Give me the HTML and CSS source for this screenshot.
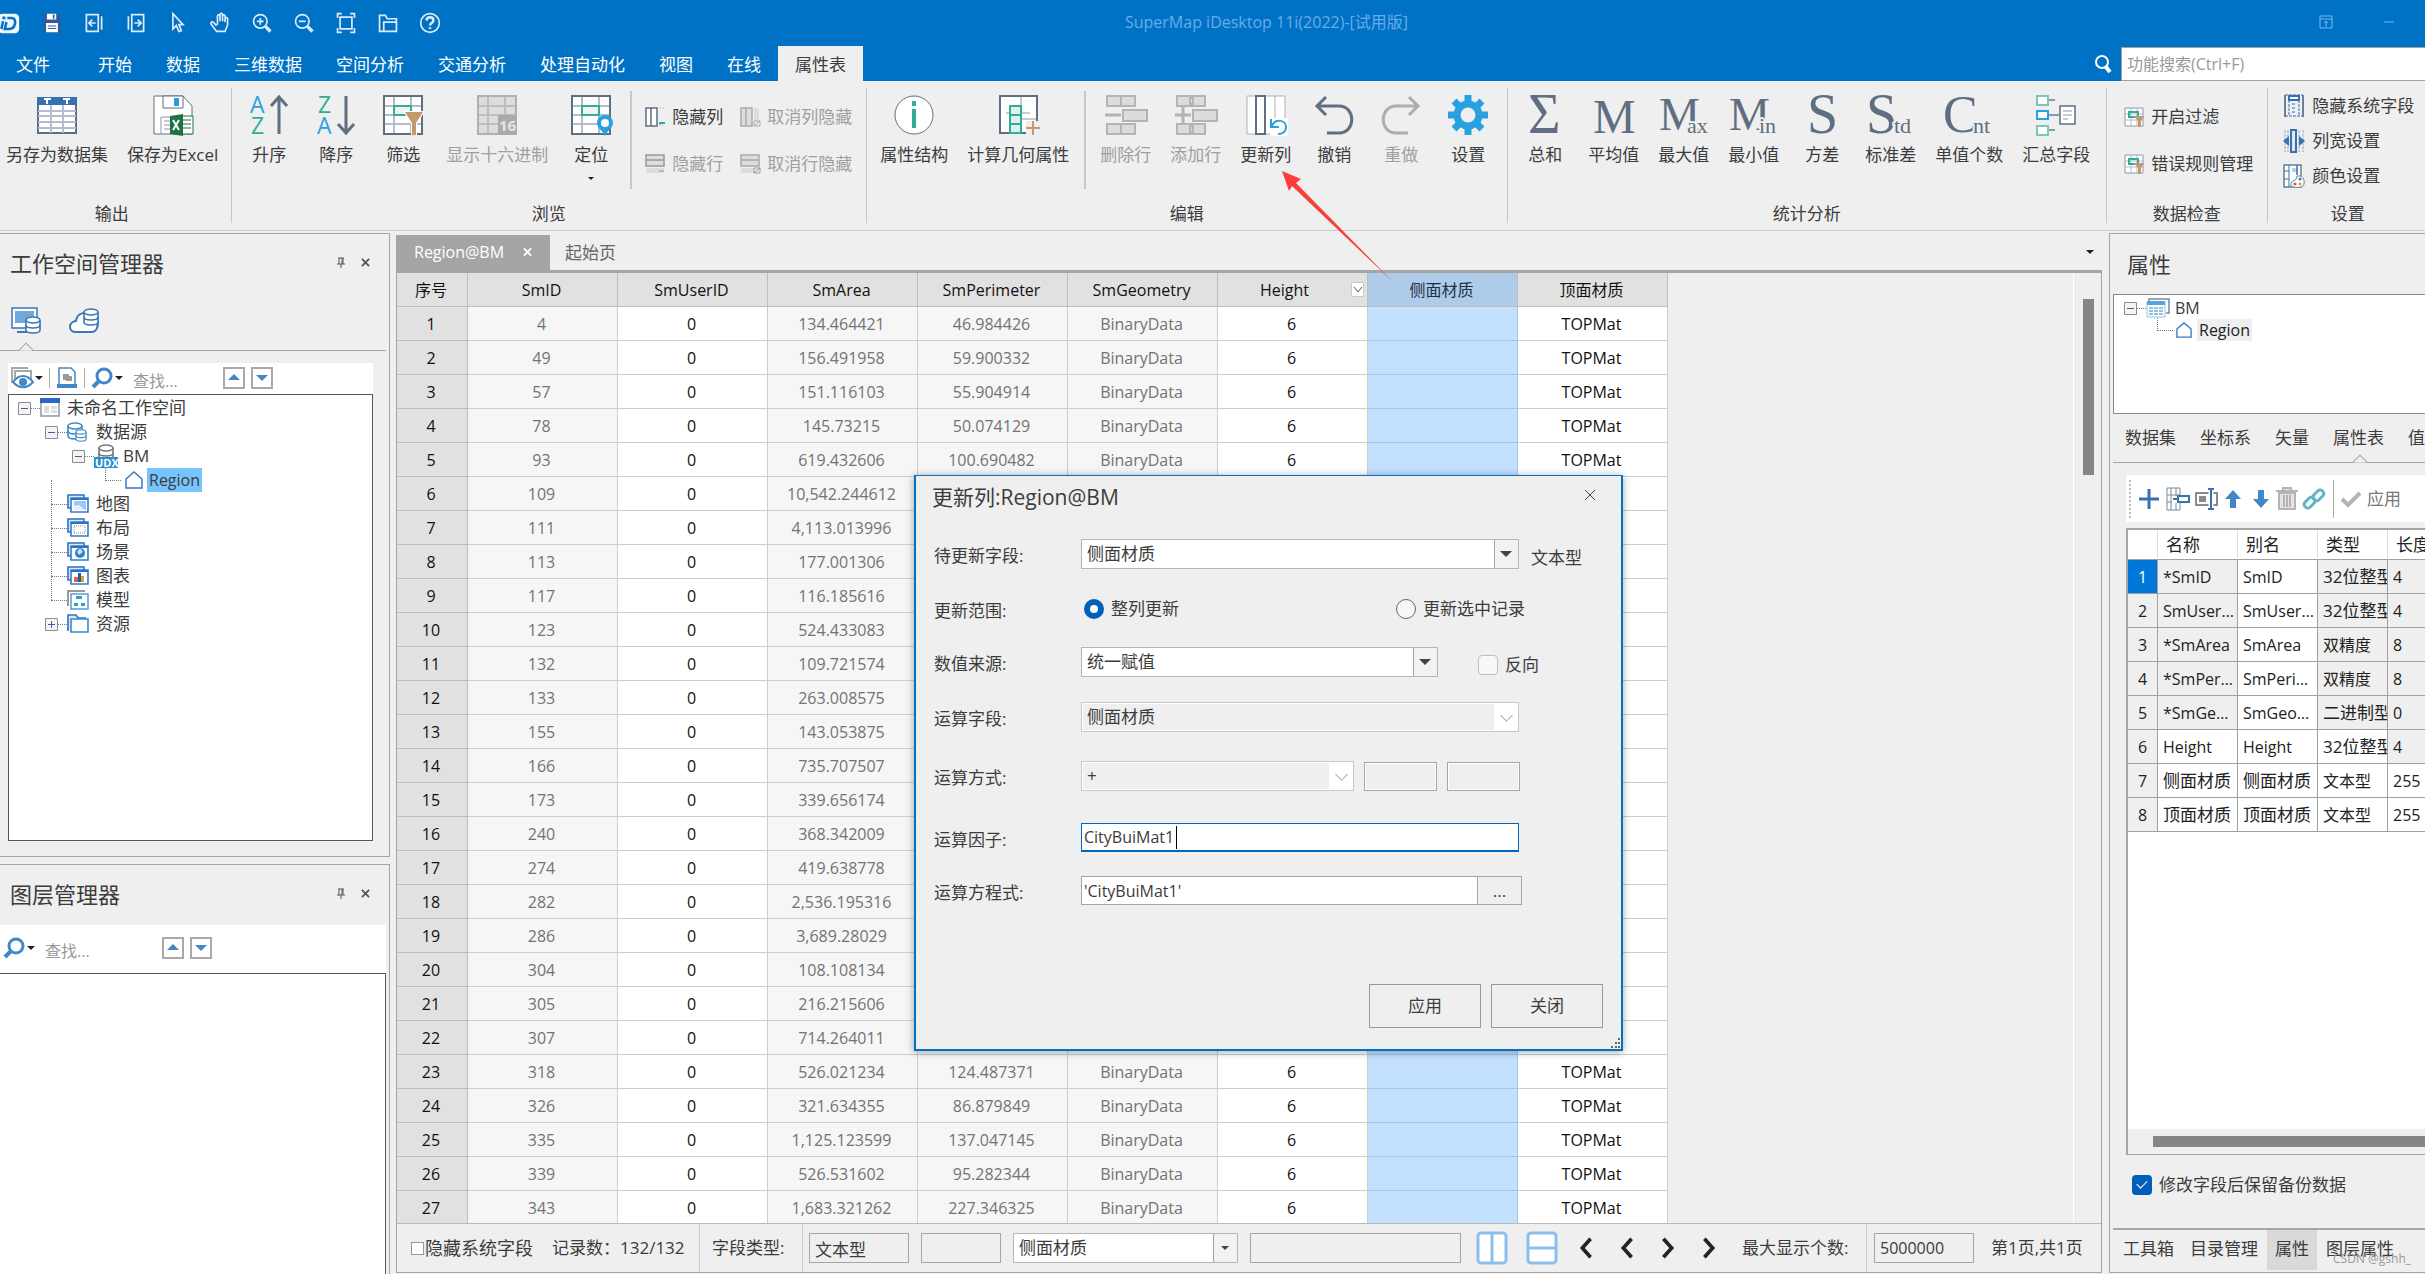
FILE: index.html
```html
<!DOCTYPE html>
<html lang="zh-CN">
<head>
<meta charset="utf-8">
<title>SuperMap iDesktop</title>
<link rel="stylesheet" href="styles.css">
</head>
<body>
<svg class="defs" aria-hidden="true">
  <symbol id="grid" viewBox="0 0 40 40"><path d="M1 1h38v38H1z" fill="#fff" stroke="#5f6f81" stroke-width="2"/><path d="M11 2v36M28 2v36M2 11h36M2 20h36M2 29h36" stroke="#b4bcc9" stroke-width="2"/><path d="M11 11h17v9H11z" fill="#f2f2f2" stroke="#30ae96" stroke-width="2"/></symbol>
  <symbol id="filter" viewBox="0 0 20 20"><path d="M1 1h18v18H1z" fill="#fff" stroke="#8d98a7"/><path d="M7 1v18M13 1v18M1 7h18M1 13h18" stroke="#b4bcc9"/><path d="M5 5h9v5H5z" fill="none" stroke="#30ae96" stroke-width="2"/><path d="M10 9h10l-3 5v6h-3v-6z" fill="#c49a6c"/></symbol>
  <symbol id="pin" viewBox="0 0 10 12"><path d="M2 1h6M3 1v6M7 1v6M6 1v6M1 7h8M5 7v4" stroke="#555" fill="none"/></symbol>
  <symbol id="cross" viewBox="0 0 10 10"><path d="M1 1l8 8M9 1l-8 8" stroke="#555" stroke-width="2" fill="none"/></symbol>
  <symbol id="lens" viewBox="0 0 22 22"><circle cx="13" cy="9" r="7" fill="#fff" stroke="#4387c7" stroke-width="3"/><path d="M8 14l-6 6" stroke="#4387c7" stroke-width="4"/></symbol>
  <symbol id="up" viewBox="0 0 22 22"><path d="M1 1h20v20H1z" fill="#fff" stroke="#a9a9a9" stroke-width="2"/><path d="M5 13l6-6 6 6z" fill="#4387c7"/></symbol>
  <symbol id="down" viewBox="0 0 22 22"><path d="M1 1h20v20H1z" fill="#fff" stroke="#a9a9a9" stroke-width="2"/><path d="M5 8l6 6 6-6z" fill="#4387c7"/></symbol>
  <symbol id="minus" viewBox="0 0 13 13"><path d="M.5.5h12v12H.5z" fill="#f4f4f4" stroke="#8d8d8d"/><path d="M3 6.500h7" stroke="#3b5fa8"/></symbol>
  <symbol id="plus" viewBox="0 0 13 13"><path d="M.5.5h12v12H.5z" fill="#f4f4f4" stroke="#8d8d8d"/><path d="M3 6.500h7M6.500 3v7" stroke="#3b5fa8"/></symbol>
  <symbol id="region" viewBox="0 0 20 18"><path d="M2 17V8l8-7 8 7v9z" fill="#fff" stroke="#3a78c4" stroke-width="1.500"/></symbol>
  <symbol id="sheets" viewBox="0 0 22 20"><path d="M4 14H1V1h16v3" fill="#dceaf8" stroke="#2f6fc4" stroke-width="1.600"/><path d="M4 4h17v14H4z" fill="#fff" stroke="#2f7fc8" stroke-width="1.600"/><path d="M4 5h17" stroke="#2f6fc4" stroke-width="2"/></symbol>
  <symbol id="db" viewBox="0 0 16 18"><path d="M1 4v10c0 4 14 4 14 0V4" fill="#fff" stroke="currentColor" stroke-width="1.600"/><ellipse cx="8" cy="4" rx="7" ry="3" fill="#fff" stroke="currentColor" stroke-width="1.600"/><path d="M1 9c0 4 14 4 14 0" fill="none" stroke="currentColor" stroke-width="1.600"/></symbol>
</svg>

<header class="top">
  <div class="titlebar">
    <div class="quick">
      <button aria-label="iDesktop"><svg viewBox="0 0 26 26"><rect x="0" y="2" width="25" height="23" rx="5" fill="#eef5fb"/><path d="M6 11l-2 9M11 7h5c7 0 5 13-3 13H8l2-8" fill="none" stroke="#0072c6" stroke-width="3"/><circle cx="7" cy="7" r="2" fill="#0072c6"/></svg></button>
      <button aria-label="保存"><svg viewBox="0 0 26 26"><path d="M3 2h20v23H3z" fill="#30599f"/><path d="M7 2h11v7H7zM6 13h14v11H6z" fill="#fff"/><path d="M14 3h2v5h-2zM8 16h10v1H8zM8 19h10v1H8z" fill="#30599f"/></svg></button>
      <button aria-label="后退"><svg viewBox="0 0 26 26" class="line"><path d="M4 3h14v20H4zM22 5v16M15 13H7m4-4l-4 4 4 4"/></svg></button>
      <button aria-label="前进"><svg viewBox="0 0 26 26" class="line"><path d="M8 3h14v20H8zM4 5v16M11 13h8m-4-4l4 4-4 4"/></svg></button>
      <button aria-label="选择"><svg viewBox="0 0 26 26" class="line"><path d="M7 2v18l4-4 3 7 3-1-3-7h5z"/></svg></button>
      <button aria-label="漫游"><svg viewBox="0 0 26 26" class="line"><path d="M9 16l-4-4c-2-1-4 1-2 3l6 8h10l3-8V8c0-2-3-2-3 0v4-7c0-2-3-2-3 0v6-8c0-2-3-2-3 0v8-6c0-2-3-2-3 0v10"/></svg></button>
      <button aria-label="放大"><svg viewBox="0 0 26 26" class="line"><circle cx="11" cy="11" r="8"/><path d="M7 11h8M11 7v8"/><path d="M17 17l6 6" stroke-width="4"/></svg></button>
      <button aria-label="缩小"><svg viewBox="0 0 26 26" class="line"><circle cx="11" cy="11" r="8"/><path d="M7 11h8"/><path d="M17 17l6 6" stroke-width="4"/></svg></button>
      <button aria-label="全幅"><svg viewBox="0 0 26 26" class="line"><path d="M6 6h14v14H6zM8 2H3v5M18 2h5v5M8 24H3v-5M18 24h5v-5"/></svg></button>
      <button aria-label="打开"><svg viewBox="0 0 26 26" class="line"><path d="M3 23V4h7l2 4h11v15zM8 23V12h15"/></svg></button>
      <button aria-label="帮助"><svg viewBox="0 0 26 26" class="line"><circle cx="13" cy="13" r="11"/><path d="M9 10c0-5 8-5 8 0 0 3-4 3-4 6M13 18v2" stroke-width="3"/></svg></button>
    </div>
    <h1>SuperMap iDesktop 11i(2022)-[试用版]</h1>
    <div class="winctl">
      <button aria-label="功能区显示"><svg width="14" height="14" viewBox="0 0 14 14"><path d="M1 1h12v12H1zM1 4h12M7 12V6M5 8l2-2 2 2" fill="none" stroke="#7cb5ee"/></svg></button>
      <button aria-label="最小化"><svg width="12" height="14" viewBox="0 0 12 14"><path d="M1 7h10" stroke="#7cb5ee"/></svg></button>
    </div>
  </div>
  <div class="menubar">
    <nav>
      <a href="#" class="file">文件</a><a href="#">开始</a><a href="#">数据</a><a href="#">三维数据</a><a href="#">空间分析</a><a href="#">交通分析</a><a href="#">处理自动化</a><a href="#">视图</a><a href="#">在线</a><a href="#" class="active">属性表</a>
    </nav>
    <label class="find"><svg width="18" height="20" viewBox="0 0 18 20"><circle cx="8" cy="8" r="6" fill="none" stroke="#fff" stroke-width="2"/><path d="M12 13l4 5" stroke="#fff" stroke-width="4"/></svg><input type="text" aria-label="功能搜索" placeholder="功能搜索(Ctrl+F)"></label>
  </div>
</header>

<section class="ribbon">
  <div class="group g-out">
    <div class="tools">
      <button class="tool"><svg viewBox="0 0 40 40"><path d="M1 3h38v35H1z" fill="#fff" stroke="#5f6f81" stroke-width="2"/><path d="M14 10v28M26 10v28M1 16h38M1 21h38M1 27h38M1 33h38" stroke="#b4bcd0" stroke-width="2"/><path d="M0 2h40v8H0z" fill="#3871b0"/><path d="M7 4h7M10 4v5M26 4h7M30 4v5" stroke="#fff" stroke-width="2"/></svg>另存为数据集</button>
      <button class="tool"><svg viewBox="0 0 40 40"><path d="M1 1h29l9 10v28H1z" fill="#fff" stroke="#5f6f81"/><path d="M10 1h20v12H10z" fill="#fff" stroke="#5f6f81"/><path d="M21 3h5v8h-5z" fill="#2a9be0"/><path d="M8 39V22h12M11 26h6M11 30h6M11 34h6" fill="none" stroke="#8d98a7"/><path d="M28 21h12v18H28zM30 25h8M30 29h8M30 33h8" fill="#fff" stroke="#1f7244"/><path d="M17 21l13-2v22l-13-2z" fill="#1f7244"/><path d="M20 25l6 10M26 25l-6 10" stroke="#fff" stroke-width="2"/></svg>保存为Excel</button>
    </div>
    <h2>输出</h2>
  </div>
  <div class="group">
    <div class="tools">
      <button class="tool"><svg viewBox="0 0 40 40"><text x="1" y="18" class="az b">A</text><text x="2" y="39" class="az g">Z</text><path d="M30 39V3M22 11l8-9 8 9" class="st"/></svg>升序</button>
      <button class="tool"><svg viewBox="0 0 40 40"><text x="2" y="18" class="az g">Z</text><text x="1" y="39" class="az b">A</text><path d="M30 1v36M22 29l8 9 8-9" class="st"/></svg>降序</button>
      <button class="tool"><svg viewBox="0 0 40 40"><use href="#grid" width="40" height="40"/><path d="M20 16h22l-8 13v11h-6V29z" fill="#fff"/><path d="M22 17h18l-7 11v12h-4V28z" fill="#c49a6c"/></svg>筛选</button>
      <button class="tool" disabled><svg viewBox="0 0 40 40"><path d="M1 1h38v38H1z" fill="#ddd" stroke="#b0b0b0" stroke-width="2"/><path d="M11 2v36M28 2v36M2 11h36M2 20h36M2 29h36" stroke="#bdbdbd" stroke-width="2"/><path d="M21 20h19v20H21z" fill="#ababab"/><text x="22" y="36" font-size="15" font-weight="700" fill="#e4e4e4">16</text></svg>显示十六进制</button>
      <button class="tool drop"><svg viewBox="0 0 40 40"><use href="#grid" width="40" height="40"/><path d="M34 41c-2-5-8-8-8-13a8 8 0 0116 0c0 5-6 8-8 13z" fill="#29a0e0"/><circle cx="34" cy="28" r="4" fill="#fff"/></svg>定位</button>
    </div>
    <i class="sep"></i>
    <div class="mini">
      <button><svg viewBox="0 0 20 20"><path d="M1 1h11v18H1zM6 1v18" fill="#fff" stroke="#5f6f81" stroke-width="1.500"/><path d="M14 1h5M14 18h4" stroke="#bbb" stroke-dasharray="2 1"/><path d="M14 16h6" stroke="#30ae96" stroke-width="2"/></svg>隐藏列</button>
      <button disabled><svg viewBox="0 0 20 20"><path d="M1 1h11v18H1zM6 1v18" fill="#ddd" stroke="#aaa" stroke-width="1.500"/><path d="M14 1h5v13h-5z" fill="#ddd"/><path d="M14 14h6v5h-6zM14 19l6-5" fill="none" stroke="#aaa"/></svg>取消列隐藏</button>
      <button disabled><svg viewBox="0 0 20 20"><path d="M1 1h18v11H1zM1 6h18" fill="#ddd" stroke="#999" stroke-width="1.500"/><path d="M1 14h18v5H1z" fill="#ddd"/><path d="M14 17h5" stroke="#999"/></svg>隐藏行</button>
      <button disabled><svg viewBox="0 0 20 20"><path d="M1 1h18v11H1zM1 6h18" fill="#ddd" stroke="#aaa" stroke-width="1.500"/><path d="M1 14h12v5H1z" fill="#ddd"/><path d="M14 14h6v5h-6zM14 19l6-5" fill="none" stroke="#999"/></svg>取消行隐藏</button>
    </div>
    <h2>浏览</h2>
  </div>
  <div class="group">
    <div class="tools">
      <button class="tool"><svg viewBox="0 0 40 40"><circle cx="20" cy="20" r="19" fill="#fff" stroke="#5f6f81"/><path d="M20 6v5M20 14v19" stroke="#30ae96" stroke-width="4"/></svg>属性结构</button>
      <button class="tool"><svg viewBox="0 0 40 40"><path d="M2 1h37v37H2z" fill="#fff" stroke="#5f6f81" stroke-width="2"/><path d="M23 2v36M8 18h24M24 24h14" stroke="#b4bcc9" stroke-width="1.500"/><path d="M12 11h11v27H12zM12 20h11M12 29h11" fill="#e2efec" stroke="#30ae96" stroke-width="2"/><path d="M28 26h14v15H28z" fill="#efefef"/><path d="M35 26v14M28 33h14" stroke="#c49a6c" stroke-width="2"/></svg>计算几何属性</button>
    </div>
    <i class="sep"></i>
    <div class="tools">
      <button class="tool" disabled><svg viewBox="0 0 40 40" class="off"><path d="M1 1h28v10H1zM15 1v10M17 15h24v11H17zM1 29h28v10H1zM15 29v10"/><path d="M-1 20h16" stroke-width="3"/></svg>删除行</button>
      <button class="tool" disabled><svg viewBox="0 0 40 40" class="off"><path d="M1 1h28v10H1zM14 3h3v6h-3zM17 15h24v11H17zM1 29h28v10H1zM14 31h3v6h-3z"/><path d="M-1 20h16M7 12v16" stroke-width="3"/></svg>添加行</button>
      <button class="tool"><svg viewBox="0 0 40 40"><path d="M1 1h38v38H1zM29 1v38" fill="#fff" stroke="#a9b2c0"/><path d="M10 1h9v38h-9z" fill="#fff" stroke="#5f6f81" stroke-width="2"/><path d="M24 23h18v18H24z" fill="#fff"/><path d="M25 24v8h8M26 31c3-8 14-6 14 1 0 5-4 7-8 7" fill="none" stroke="#29a0e0" stroke-width="2"/></svg>更新列</button>
      <button class="tool"><svg viewBox="0 0 40 40" class="st"><path d="M12 2L3 11l9 9M3 11h22c17 0 17 27 0 27H13"/></svg>撤销</button>
      <button class="tool redo" disabled><svg viewBox="0 0 40 40" class="st"><path d="M28 2l9 9-9 9M37 11H15c-17 0-17 27 0 27h12"/></svg>重做</button>
      <button class="tool"><svg viewBox="0 0 40 40"><circle cx="20" cy="20" r="11" fill="none" stroke="#29a0e0" stroke-width="7"/><path d="M20 0v7M20 33v7M0 20h7M33 20h7M6 6l5 5M29 29l5 5M34 6l-5 5M11 29l-5 5" stroke="#29a0e0" stroke-width="7"/></svg>设置</button>
    </div>
    <h2>编辑</h2>
  </div>
  <div class="group g-stat">
    <div class="tools stat">
      <button class="tool"><svg viewBox="0 0 40 40"><text x="3" y="38" font-size="56">Σ</text></svg>总和</button>
      <button class="tool"><svg viewBox="0 0 40 40"><text x="-1" y="38" font-size="48">M</text></svg>平均值</button>
      <button class="tool"><svg viewBox="0 0 40 40"><text x="-5" y="35" font-size="46">M</text><text x="23" y="38" font-size="22" class="sub">ax</text></svg>最大值</button>
      <button class="tool"><svg viewBox="0 0 40 40"><text x="-5" y="35" font-size="46">M</text><text x="25" y="38" font-size="22" class="sub">in</text></svg>最小值</button>
      <button class="tool"><svg viewBox="0 0 40 40"><text x="5" y="38" font-size="56">S</text></svg>方差</button>
      <button class="tool"><svg viewBox="0 0 40 40"><text x="-5" y="38" font-size="56">S</text><text x="23" y="38" font-size="22" class="sub">td</text></svg>标准差</button>
      <button class="tool"><svg viewBox="0 0 40 40"><text x="-6" y="37" font-size="52">C</text><text x="24" y="38" font-size="22" class="sub">nt</text></svg>单值个数</button>
      <button class="tool"><svg viewBox="0 0 40 40"><path d="M1 1h11v9H1zM1 31h11v9H1z" fill="#fff" stroke="#7cc7b8" stroke-width="2"/><path d="M1 16h11v8H1z" fill="#fff" stroke="#29a0e0" stroke-width="2"/><path d="M13 5h6M13 35h6M13 20h10" stroke="#8d98a7" stroke-width="2"/><path d="M24 11h15v18H24z" fill="#fff" stroke="#5f6f81" stroke-width="1.500"/><path d="M27 16h9M27 20h9M27 24h5" stroke="#b4bcc9" stroke-width="1.500"/></svg>汇总字段</button>
    </div>
    <h2>统计分析</h2>
  </div>
  <div class="group g-check">
    <div class="mini one">
      <button><svg viewBox="0 0 20 20"><use href="#filter" width="20" height="20"/></svg>开启过滤</button>
      <button><svg viewBox="0 0 20 20"><use href="#filter" width="20" height="20"/></svg>错误规则管理</button>
    </div>
    <h2>数据检查</h2>
  </div>
  <div class="group g-set">
    <div class="mini three">
      <button><svg viewBox="0 0 22 24"><path d="M2 1v22M20 1v22" stroke="#6d7f95" stroke-width="2"/><path d="M6 2h10v4H6z" fill="#fff" stroke="#3871b0" stroke-width="2"/><path d="M2 1h18M2 22h18M6 6v16M16 6v16M9 10h4M9 14h4M9 18h4" stroke="#3871b0" stroke-dasharray="3 1"/></svg>隐藏系统字段</button>
      <button><svg viewBox="0 0 22 24"><path d="M8 1h5v22H8z" fill="#dceaf8" stroke="#3871b0" stroke-width="2"/><path d="M2 1v22M20 1v22M5 1v22M16 1v22" stroke="#8fa5c0" stroke-dasharray="3 1"/><path d="M0 12l6-5v10zM22 12l-6-5v10z" fill="#3871b0"/></svg>列宽设置</button>
      <button><svg viewBox="0 0 22 24"><path d="M1 1h17v22H1z" fill="#fff" stroke="#6d7f95" stroke-width="1.500"/><path d="M6 1v22M1 7h5M1 15h5" stroke="#3871b0"/><path d="M9 4h6v4H9z" fill="#b9d3ee"/><path d="M14 1v10" stroke="#3871b0" stroke-width="1.500"/><path d="M8 21c0-6 6-3 6-9 5-1 8 3 7 8-1 5-13 4-13 1z" fill="#fff" stroke="#6d7f95"/><circle cx="12" cy="20" r="1.500" fill="#e0592a"/><circle cx="17" cy="20" r="1.500" fill="#e8a020"/><circle cx="17" cy="15" r="1.500" fill="#2f7fc8"/></svg>颜色设置</button>
    </div>
    <h2>设置</h2>
  </div>
</section>

<main>
  <aside class="left">
    <section class="panel">
      <header class="phead"><h2>工作空间管理器</h2><button aria-label="固定"><svg width="10" height="12"><use href="#pin"/></svg></button><button aria-label="关闭"><svg width="9" height="9"><use href="#cross"/></svg></button></header>
      <div class="srcs">
        <button aria-label="本地"><svg width="30" height="28" viewBox="0 0 30 28"><path d="M1 1h25v20H1z" fill="#fff" stroke="#3a78b8" stroke-width="1.500"/><path d="M4 4h19v12H4z" fill="#6fa8dc"/><path d="M6 25h10" stroke="#3a78b8" stroke-width="2"/><svg x="14" y="9" width="16" height="18" color="#3a78b8"><use href="#db"/></svg></svg></button>
        <button aria-label="云端"><svg width="30" height="28" viewBox="0 0 30 28"><path d="M7 25c-8 0-8-10 0-11 1-8 9-10 12-5h8c3 4 2 9 1 12-1 3-3 4-6 4z" fill="#fff" stroke="#3a78b8" stroke-width="2"/><svg x="14" y="1" width="16" height="18" color="#3a78b8"><use href="#db"/></svg></svg></button>
      </div>
      <div class="notch"></div>
      <div class="work">
        <div class="search">
          <button aria-label="可见"><svg width="22" height="22" viewBox="0 0 22 22"><path d="M1 16V1h16M4 18V4h16v8" fill="none" stroke="#a9a9a9" stroke-width="2"/><path d="M2 15c6-8 14-8 20 0-6 7-14 7-20 0z" fill="#fff" stroke="#4387c7" stroke-width="2"/><circle cx="12" cy="15" r="4" fill="#4387c7"/></svg></button><i class="tri"></i><i class="bar"></i>
          <button aria-label="图层"><svg width="22" height="22" viewBox="0 0 22 22"><path d="M3 17V1h12l4 4v12" fill="#fff" stroke="#4387c7" stroke-width="1.500"/><path d="M7 7h6v6H7zM10 9h6v5h-6z" fill="#9a9a9a"/><path d="M1 17h20v4H1z" fill="#4387c7"/></svg></button><i class="bar"></i>
          <button aria-label="搜索"><svg width="22" height="22"><use href="#lens"/></svg></button><i class="tri"></i>
          <input type="text" aria-label="查找" placeholder="查找...">
          <button aria-label="上一个"><svg width="22" height="22"><use href="#up"/></svg></button>
          <button aria-label="下一个"><svg width="22" height="22"><use href="#down"/></svg></button>
        </div>
        <ul class="tree">
          <li><svg class="tw"><use href="#minus"/></svg><i class="dot"></i><svg width="20" height="20" viewBox="0 0 20 20"><path d="M1 1h18v17H1z" fill="#fff" stroke="#8d98a7" stroke-width="1.500"/><path d="M0 0h20v5H0z" fill="#2a67c9"/><path d="M4 8h5v7H4zM11 8h6v3h-6zM11 12h6v3h-6z" fill="#ddd"/></svg><span>未命名工作空间</span></li>
          <li class="d1"><svg class="tw"><use href="#minus"/></svg><i class="dot"></i><svg width="22" height="20" color="#3a8ac8"><svg x="0" y="0" width="16" height="18"><use href="#db"/></svg><svg x="8" y="7" width="12" height="13"><use href="#db"/></svg></svg><span>数据源</span></li>
          <li class="d2"><svg class="tw"><use href="#minus"/></svg><i class="dot"></i><svg width="24" height="24" viewBox="0 0 24 24"><svg x="2" y="0" width="20" height="18" color="#777"><use href="#db"/></svg><path d="M0 13h24v11H0z" fill="#2a8fd0"/><text x="1" y="23" font-size="11" font-weight="700" fill="#fff">UDX</text></svg><span>BM</span></li>
          <li class="d3"><i class="dot elbow"></i><svg width="20" height="18"><use href="#region"/></svg><span class="sel">Region</span></li>
          <li class="leaf"><i class="dot"></i><svg width="22" height="20"><use href="#sheets"/><path d="M7 7h12v9H7z" fill="#9cc8f5"/><path d="M7 12l5-1 6 5H7z" fill="#e3f0fc"/></svg><span>地图</span></li>
          <li class="leaf"><i class="dot"></i><svg width="22" height="20"><use href="#sheets"/><path d="M7 8h11v7H7z" fill="none" stroke="#888" stroke-dasharray="1 1"/></svg><span>布局</span></li>
          <li class="leaf"><i class="dot"></i><svg width="22" height="20"><use href="#sheets"/><circle cx="13" cy="11" r="5" fill="#2f7fc8"/><path d="M13 6l3 4-4 3-2-3z" fill="#c5e2f8"/></svg><span>场景</span></li>
          <li class="leaf"><i class="dot"></i><svg width="22" height="20"><use href="#sheets"/><path d="M7 11h4v5H7z" fill="#d9673a"/><path d="M11 7h3v9h-3z" fill="#1f5fae"/><path d="M14 10h3v6h-3z" fill="#e0a030"/></svg><span>图表</span></li>
          <li class="leaf"><i class="dot"></i><svg width="22" height="20"><path d="M1 16V1h17" fill="none" stroke="#999" stroke-width="2"/><path d="M4 4h17v15H4z" fill="#fff" stroke="#5a9bd5" stroke-width="1.500"/><path d="M9 6h6v3H9zM7 13h4v3H7zM14 13h4v3h-4z" fill="#29a0d0"/></svg><span>模型</span></li>
          <li class="d1"><svg class="tw"><use href="#plus"/></svg><i class="dot"></i><svg width="22" height="20"><path d="M1 17V1h8l2 3h8" fill="#dceaf8" stroke="#2f6fc4" stroke-width="1.600"/><path d="M4 5h17v13H4z" fill="#fff" stroke="#3a8ac8" stroke-width="1.600"/></svg><span>资源</span></li>
        </ul>
      </div>
    </section>
    <section class="panel layers">
      <header class="phead"><h2>图层管理器</h2><button aria-label="固定"><svg width="10" height="12"><use href="#pin"/></svg></button><button aria-label="关闭"><svg width="9" height="9"><use href="#cross"/></svg></button></header>
      <div class="search">
        <button aria-label="搜索"><svg width="22" height="22"><use href="#lens"/></svg></button><i class="tri"></i>
        <input type="text" aria-label="查找图层" placeholder="查找...">
        <button aria-label="上一个"><svg width="22" height="22"><use href="#up"/></svg></button>
        <button aria-label="下一个"><svg width="22" height="22"><use href="#down"/></svg></button>
      </div>
      <div class="blank"></div>
    </section>
  </aside>

  <section class="doc">
    <div class="doctabs">
      <a href="#" class="on">Region@BM <svg width="9" height="10" viewBox="0 0 10 10"><path d="M1 1l8 8M9 1l-8 8" stroke="#fff" stroke-width="2"/></svg></a>
      <a href="#">起始页</a>
      <i class="tri"></i>
    </div>
    <div class="docbody">
      <div class="sheet">
        <table class="data">
          <thead><tr><th>序号</th><th>SmID</th><th>SmUserID</th><th>SmArea</th><th>SmPerimeter</th><th>SmGeometry</th><th class="h"><div>Height<button aria-label="筛选"><svg width="10" height="8" viewBox="0 0 10 8"><path d="M1 1l4 5 4-5" fill="none" stroke="#555"/></svg></button></div></th><th class="pick">侧面材质</th><th>顶面材质</th></tr></thead>
          <tbody id="rows"></tbody>
        </table>
        <div class="vbar"><i></i></div>
      </div>
      <footer class="status">
        <label class="hide"><input type="checkbox">隐藏系统字段</label>
        <span class="count">记录数：132/132</span>
        <span class="ftype">字段类型:</span>
        <input class="w100" type="text" aria-label="字段类型" value="文本型" readonly>
        <input class="w80" type="text" aria-label="长度" readonly>
        <span class="combo w225"><select aria-label="字段"><option>侧面材质</option></select></span>
        <input class="w211" type="text" aria-label="值" readonly>
        <button aria-label="左右分栏"><svg width="32" height="34" viewBox="0 0 32 34"><rect x="2" y="2" width="28" height="30" rx="3" fill="#fff" stroke="#8cbfee" stroke-width="3"/><path d="M16 2v30" stroke="#8cbfee" stroke-width="3"/></svg></button>
        <button class="split2" aria-label="上下分栏"><svg width="32" height="34" viewBox="0 0 32 34"><rect x="2" y="2" width="28" height="30" rx="3" fill="#fff" stroke="#8cbfee" stroke-width="3"/><path d="M2 17h28" stroke="#8cbfee" stroke-width="3"/></svg></button>
        <button class="pg" aria-label="首页"><svg viewBox="0 0 16 24"><path d="M13 2L4 12l9 10"/></svg></button>
        <button class="pg" aria-label="上一页"><svg viewBox="0 0 16 24"><path d="M13 2L4 12l9 10"/></svg></button>
        <button class="pg" aria-label="下一页"><svg viewBox="0 0 16 24"><path d="M3 2l9 10-9 10"/></svg></button>
        <button class="pg" aria-label="末页"><svg viewBox="0 0 16 24"><path d="M3 2l9 10-9 10"/></svg></button>
        <label class="max" for="max">最大显示个数:</label>
        <input class="w100 white" id="max" type="text" value="5000000">
        <span class="pageno">第1页,共1页</span>
      </footer>
    </div>
  </section>

  <aside class="right">
    <h2>属性</h2>
    <ul class="ptree">
      <li><svg class="tw"><use href="#minus"/></svg><i class="dot"></i><svg width="24" height="20" viewBox="0 0 24 20"><path d="M3 3V1h20v14h-3" fill="#fff" stroke="#7a8a99" stroke-width="1.500"/><path d="M1 4h18v15H1z" fill="#fff" stroke="#8fc5dc"/><path d="M1 3h18v4H1z" fill="#5aa5d8"/><path d="M3 10h14M3 13h14M3 16h14" stroke="#8fc5dc" stroke-width="2" stroke-dasharray="4 1"/></svg><span>BM</span></li>
      <li class="sub"><i class="dot elbow"></i><svg width="20" height="16"><use href="#region"/></svg><span class="cur">Region</span></li>
    </ul>
    <nav class="ptabs"><a href="#">数据集</a><a href="#">坐标系</a><a href="#">矢量</a><a href="#">属性表</a><a href="#">值域</a></nav>
    <div class="notch"></div>
    <div class="pbar">
      <i class="grip"></i>
      <button aria-label="添加"><svg width="22" height="22"><path d="M11 1v20M1 11h20" stroke="#3871b0" stroke-width="3"/></svg></button>
      <button aria-label="插入"><svg width="24" height="24"><path d="M1 1h13v22H1zM5 1v22M10 1v22M1 8h13M1 15h13" fill="#fff" stroke="#7a8a99"/><path d="M6 9h17v7H6z" fill="#fff"/><path d="M12 9h11v6H12z" fill="#fff" stroke="#3871b0" stroke-width="2"/><path d="M7 12h5" stroke="#3871b0" stroke-width="2"/></svg></button>
      <button aria-label="重命名"><svg width="22" height="24"><path d="M0 6h21v12H0z" fill="none" stroke="#8a8a8a" stroke-width="2"/><path d="M3 9h7v6H3z" fill="#8a8a8a"/><path d="M15 3v18" stroke="#fff" stroke-width="5"/><path d="M15 3v18M12 2h6M12 22h6" stroke="#3871b0" stroke-width="2"/></svg></button>
      <button aria-label="上移"><svg width="20" height="20"><path d="M9 1l8 9h-5v9H6v-9H1z" fill="#4387c7"/></svg></button>
      <button aria-label="下移"><svg width="20" height="20"><path d="M11 19l8-9h-5V1H8v9H3z" fill="#4387c7"/></svg></button>
      <button aria-label="删除"><svg width="22" height="24"><path d="M0 4h22M7 3V1h8v2M3 6h16v16H3zM8 8v12M11 8v12M14 8v12" fill="#e4e4e4" stroke="#b4b4b4" stroke-width="2"/></svg></button>
      <button aria-label="链接"><svg width="20" height="20"><g fill="none" stroke="#63b3c6" stroke-width="3"><rect x="8" y="3" width="12" height="7" rx="3" transform="rotate(-45 14 6)"/><rect x="0" y="10" width="12" height="7" rx="3" transform="rotate(-45 6 14)"/></g></svg></button>
      <i class="bar"></i>
      <button class="apply"><svg width="20" height="16"><path d="M1 8l6 6L19 2" fill="none" stroke="#b4b4b4" stroke-width="4"/></svg>应用</button>
    </div>
    <div class="pgrid">
      <table>
        <thead><tr><th></th><th>名称</th><th>别名</th><th>类型</th><th>长度</th></tr></thead>
        <tbody>
          <tr><th class="act">1</th><td class="ro">*SmID</td><td>SmID</td><td class="ro clip">32位整型</td><td class="ro">4</td></tr>
          <tr><th>2</th><td class="ro">SmUserID</td><td>SmUserID</td><td class="ro clip">32位整型</td><td class="ro">4</td></tr>
          <tr><th>3</th><td class="ro">*SmArea</td><td>SmArea</td><td class="ro">双精度</td><td class="ro">8</td></tr>
          <tr><th>4</th><td class="ro">*SmPerimeter</td><td>SmPerimeter</td><td class="ro">双精度</td><td class="ro">8</td></tr>
          <tr><th>5</th><td class="ro">*SmGeometry</td><td>SmGeometry</td><td class="ro clip">二进制型</td><td class="ro">0</td></tr>
          <tr><th>6</th><td>Height</td><td>Height</td><td class="clip">32位整型</td><td class="ro">4</td></tr>
          <tr><th>7</th><td class="clip">侧面材质</td><td class="clip">侧面材质</td><td>文本型</td><td>255</td></tr>
          <tr><th>8</th><td class="clip">顶面材质</td><td class="clip">顶面材质</td><td>文本型</td><td>255</td></tr>
        </tbody>
      </table>
      <div class="hbar"><i></i></div>
    </div>
    <label class="keep"><input type="checkbox" checked>修改字段后保留备份数据</label>
    <nav class="btabs"><a href="#">工具箱</a><a href="#">目录管理</a><a href="#" class="on">属性</a><a href="#">图层属性</a></nav>
    <small class="mark">CSDN @gshh_</small>
  </aside>
</main>

<form class="dialog" role="dialog" aria-label="更新列">
  <header><h2>更新列:Region@BM</h2><button type="button" aria-label="关闭"><svg width="12" height="12"><path d="M1 1l10 10M11 1L1 11" stroke="#444"/></svg></button></header>
  <div class="fields">
    <label for="f1">待更新字段:</label>
    <div><span class="combo w438"><select id="f1"><option>侧面材质</option></select></span><span class="ty">文本型</span></div>
    <span class="lab">更新范围:</span>
    <div class="radios"><label><input type="radio" name="range" checked>整列更新</label><label><input type="radio" name="range">更新选中记录</label></div>
    <label for="f3">数值来源:</label>
    <div><span class="combo w357"><select id="f3"><option>统一赋值</option></select></span><label class="rev"><input type="checkbox">反向</label></div>
    <label for="f4">运算字段:</label>
    <div><span class="combo dis w438"><select id="f4" disabled><option>侧面材质</option></select></span></div>
    <label for="f5">运算方式:</label>
    <div class="ops"><span class="combo dis w273"><select id="f5" disabled><option>+</option></select></span><input type="text" aria-label="参数一" disabled><input type="text" aria-label="参数二" disabled></div>
    <label for="f6">运算因子:</label>
    <div><span class="focus"><input id="f6" type="text" value="CityBuiMat1"><i></i></span></div>
    <label for="f7">运算方程式:</label>
    <div class="expr"><input id="f7" type="text" value="'CityBuiMat1'"><button type="button">...</button></div>
  </div>
  <footer><button type="button">应用</button><button type="button">关闭</button></footer>
  <svg class="size" width="10" height="10"><path d="M8 1h2M5 5h2M8 5h2M1 9h2M5 9h2M8 9h2" stroke="#666" stroke-width="2"/></svg>
</form>
<svg class="arrow" width="112" height="112" viewBox="0 0 112 112"><path d="M0 0l19 8-5 4 97 99L10 15l-3 5z" fill="#fc3d39"/></svg>
<script src="rows.js"></script>
</body>
</html>
```
FILE: rows.js
```js
const records = [
  [4, '134.464421', '46.984426'], [49, '156.491958', '59.900332'], [57, '151.116103', '55.904914'],
  [78, '145.73215', '50.074129'], [93, '619.432606', '100.690482'], [109, '10,542.244612', ''],
  [111, '4,113.013996', ''], [113, '177.001306', ''], [117, '116.185616', ''], [123, '524.433083', ''],
  [132, '109.721574', ''], [133, '263.008575', ''], [155, '143.053875', ''], [166, '735.707507', ''],
  [173, '339.656174', ''], [240, '368.342009', ''], [274, '419.638778', ''], [282, '2,536.195316', ''],
  [286, '3,689.28029', ''], [304, '108.108134', ''], [305, '216.215606', ''], [307, '714.264011', ''],
  [318, '526.021234', '124.487371'], [326, '321.634355', '86.879849'], [335, '1,125.123599', '137.047145'],
  [339, '526.531602', '95.282344'], [343, '1,683.321262', '227.346325']
];
document.getElementById('rows').innerHTML = records.map(([id, area, len], i) =>
  `<tr><th>${i + 1}</th><td class="ro">${id}</td><td>0</td><td class="ro">${area}</td><td class="ro">${len}</td>` +
  `<td class="ro">${len ? 'BinaryData' : ''}</td><td>${len ? 6 : ''}</td><td class="pick"></td><td>${len ? 'TOPMat' : ''}</td></tr>`).join('');
```
FILE: styles.css
```css
* { box-sizing: border-box; }
html, body { height: 100%; }
body { margin: 0; display: grid; grid-template-rows: auto auto minmax(0, 1fr); grid-template-columns: minmax(0, 1fr); position: relative; overflow: hidden; background: #efefef; color: #3c3c3c; font: 17px/24px "Open Sans", "Noto Sans CJK SC", sans-serif; }
button, input, select { font: inherit; color: inherit; margin: 0; }
button { border: 0; padding: 0; background: none; white-space: nowrap; }
a { color: inherit; text-decoration: none; }
h1, h2 { margin: 0; font-weight: 400; }
ul { margin: 0; padding: 0; list-style: none; }
svg { overflow: visible; flex: none; }
.defs { position: absolute; width: 0; height: 0; }

.top { background: #0072c6; color: #fff; }
.titlebar { display: grid; grid-template-columns: 1fr auto 1fr; height: 46px; align-items: center; }
.quick { display: flex; gap: 16px; height: 40px; align-items: center; }
.quick button { width: 26px; height: 26px; }
.quick button:first-child { margin: 0 1px 0 -4px; }
.quick svg { display: block; width: 22px; height: 24px; margin: 0 auto; }
.line { fill: none; stroke: #dcebf8; stroke-width: 2; }
.titlebar h1 { font-size: 16px; line-height: 24px; color: #69abe9; padding: 0 0 2px 108px; }
.winctl { display: flex; justify-content: flex-end; gap: 50px; padding-right: 30px; }
.menubar { display: flex; justify-content: space-between; height: 35px; }
.menubar nav { display: flex; }
.menubar nav a { padding: 7px 17px 0; }
.menubar nav a.file { padding-left: 16px; margin-right: 14px; }
.menubar nav a.active { background: #efefef; color: #3c3c3c; }
.find { display: flex; align-items: center; gap: 9px; }
.find input { width: 304px; height: 34px; border: 1px solid #a0a0a0; border-right: 0; padding: 0 5px; background: #fff; font-size: 16px; }
::placeholder { color: #999; opacity: 1; }

.ribbon { display: flex; height: 150px; border-bottom: 1px solid #cdcdcd; overflow: hidden; }
.group { position: relative; display: flex; padding: 0 5px; flex: none; }
.group + .group::before { content: ""; position: absolute; left: 0; top: 7px; width: 1px; height: 135px; background: #c8c8c8; }
.group.g-out { padding: 0 3px 0 0; }
.g-out .tools { margin-left: -3px; }
.g-out h2 { padding-right: 8px; }
.group.g-stat { padding-right: 6px; }
.group h2 { position: absolute; left: 0; right: 0; top: 121px; text-align: center; font-size: 17px; line-height: 24px; }
.tools { display: flex; align-items: flex-start; }
.tool { min-width: 67px; padding: 14px 10px 0 9px; display: flex; flex-direction: column; align-items: center; gap: 8px; line-height: 24px; }
.tool svg { width: 40px; height: 40px; }
.tool:disabled, .mini button:disabled { color: #a0a0a0; }
.drop::after, .tri { content: ""; border: 4px solid transparent; border-top: 4px solid #222; border-bottom: 0; }
.tri { flex: none; }
.drop::after { border-width: 3px 3px 0; margin-top: 2px; }
.sep { width: 2px; height: 98px; margin: 10px 5px 0; background: #c8c8c8; }
.az { font: 23px "Open Sans", sans-serif; }
.az.b { fill: #29a0e0; }
.az.g { fill: #30ae96; }
.st, .st path { fill: none; stroke-width: 3; }
.st { stroke: #5f6f81; }
.redo .st { stroke: #adadad; }
.off { fill: #dcdcdc; stroke: #b4b4b4; stroke-width: 2; }
.stat text { font-family: "Liberation Serif", serif; fill: #5f6f81; }
.stat text.sub { stroke: #efefef; stroke-width: 4px; paint-order: stroke; }
.mini { display: grid; grid-template-columns: auto auto; grid-template-rows: 47px 47px; column-gap: 17px; align-content: start; padding: 12px 9px 0 8px; justify-content: start; }
.mini button { display: flex; align-items: center; gap: 7px; }
.mini svg { width: 20px; height: 20px; }
.mini.one { grid-template-columns: auto; padding: 12px 9px 0 13px; }
.mini.three { grid-template-columns: auto; grid-template-rows: repeat(3, 35px); padding: 7px 9px 0 11px; }
.mini.three svg { width: 22px; height: 24px; }

main { display: grid; grid-template-columns: 390px minmax(0, 1fr) 316px; min-height: 0; padding-top: 2px; }
.left { display: grid; grid-template-rows: minmax(0, 61fr) minmax(0, 40fr); gap: 7px; min-height: 0; }
.panel { display: flex; flex-direction: column; border: 1px solid #a5a5a5; border-left: 0; min-height: 0; }
.layers { border-bottom: 0; }
.phead { display: flex; align-items: center; height: 60px; padding: 0 19px 3px 10px; gap: 15px; flex: none; }
.phead h2 { font-size: 22px; flex: 1; }
.phead button { line-height: 0; }
.srcs { display: flex; gap: 28px; padding: 13px 11px 0; height: 56px; flex: none; }
.srcs button { line-height: 0; height: 28px; }
.notch { border-bottom: 1px solid #a5a5a5; margin-right: 3px; position: relative; }
.notch::after { content: ""; position: absolute; left: 20px; top: -5px; width: 10px; height: 10px; border: 1px solid #a5a5a5; border-right-color: transparent; border-bottom-color: transparent; background: linear-gradient(135deg, #efefef 50%, transparent 50%); transform: rotate(45deg); }
.work { flex: 1; margin: 12px 16px 15px 8px; display: flex; flex-direction: column; min-height: 0; }
.search { display: flex; align-items: center; background: #fff; height: 31px; padding: 0 3px 1px; flex: none; gap: 6px; }
.search button { line-height: 0; }
.search .tri { margin-left: -4px; }
.search .bar { width: 1px; height: 20px; background: #b0b0b0; }
.search input { width: 88px; border: 0; padding: 6px 0 0 4px; background: none; line-height: 24px; height: 30px; font-size: 16px; }
.tree { flex: 1; border: 1px solid #555; background: #fff; padding: 1px 0 0 9px; }
.tree li { display: flex; align-items: center; height: 24px; }
.tree li > svg:not(.tw) { margin-right: 5px; }
.tree li.d2 > svg:not(.tw), .tree li.d3 > svg { margin-right: 3px; }
.tree span { padding: 0 2px; }
.tree .d1 { padding-left: 27px; }
.tree .d2 { padding-left: 54px; }
.tree .d3 { padding-left: 87px; }
.tree .leaf { padding-left: 33px; }
.leaf .dot { width: 16px; }
.tw { width: 13px; height: 13px; }
.dot { width: 9px; border-top: 1px dotted #777; }
.leaf { position: relative; }
.leaf::before { content: ""; position: absolute; left: 33px; top: -12px; height: 24px; border-left: 1px dotted #777; }
.elbow { width: 16px; height: 13px; border: 1px dotted #777; border-width: 0 0 1px 1px; margin: 0 3px 12px 0; }
.tree .sel { background: #75c4fc; font-size: 16px; }
.layers .search { margin-right: 3px; height: 48px; padding-bottom: 3px; }
.layers .search input { width: 115px; }
.blank { flex: 1; margin-right: 3px; border: 1px solid #555; border-width: 1px 1px 0 0; background: #fff; }

.doc { display: flex; flex-direction: column; margin: 2px 7px 1px 6px; min-width: 0; min-height: 0; }
.doctabs { display: flex; height: 38px; border-bottom: 3px solid #a5a5a5; align-items: stretch; color: #666; }
.doctabs a { padding: 6px 15px 0; }
.doctabs .on { background: #a5a5a5; color: #fff; padding: 5px 18px 0; font-size: 16px; width: 154px; display: flex; justify-content: space-between; }
.doctabs .on svg { margin-top: 7px; }
.doctabs .tri { margin: 15px 8px 0 auto; height: 4px; }
.docbody { flex: 1; display: flex; flex-direction: column; border: 1px solid #a5a5a5; border-top: 0; min-height: 0; }
.sheet { flex: 1; overflow: hidden; display: flex; justify-content: space-between; min-height: 0; border-bottom: 1px solid #b9b9b9; }
.data { border-collapse: separate; border-spacing: 0; table-layout: fixed; width: 1271px; flex: none; align-self: flex-start; font-size: 16px; text-align: center; }
.data th, .data td { height: 34px; padding: 1px 2px 0 0; width: 150px; border-right: 1px solid #cdcdcd; border-bottom: 1px solid #cdcdcd; background: #fff; color: #111; font-weight: 400; line-height: 24px; }
.data th { background: #e1e1e1; border-color: #bdbdbd; }
.data th:first-child { width: 71px; }
.data .ro { background: #f6f6f6; color: #737373; }
.data td.pick { background: #c4e0ff; border-color: #a6c6e8; }
.data th.pick { background: #aecbe9; color: #1d3047; }
.h div { display: flex; justify-content: center; align-items: center; position: relative; padding-right: 14px; }
.h button { position: absolute; right: 1px; top: 4px; width: 13px; height: 15px; background: #fff; border: 1px solid #ccc; line-height: 0; display: grid; place-items: center; }
.vbar { width: 28px; border-left: 1px solid #fff; padding: 26px 0 0 9px; }
.vbar i { display: block; width: 11px; height: 176px; background: #858585; }
.status { display: flex; align-items: center; height: 48px; flex: none; white-space: nowrap; font-size: 17px; padding-left: 14px; }
.status input[type=text], .status select { height: 30px; border: 1px solid #a5a5a5; border-radius: 0; background: #efefef; padding: 0 5px; }
.status .w100 { width: 100px; margin-right: 12px; }
.status .w80 { width: 80px; margin-right: 12px; }
.w225 { width: 225px; margin-right: 12px; }
.status .w211 { width: 211px; margin-right: 15px; }
.status .white { background: #fff; margin-right: 17px; font-size: 16px; }
.hide { display: flex; align-items: center; gap: 1px; width: 141px; font-size: 18px; }
.hide input { appearance: none; width: 13px; height: 13px; border: 1px solid #999; background: #fff; }
.count { width: 147px; font-size: 17px; }
.ftype { width: 104px; height: 48px; line-height: 48px; border: 1px solid #ccc; border-width: 0 1px; padding-left: 12px; margin-right: 6px; }
.status button { line-height: 0; }
.status .split2 { margin: 0 20px 0 18px; }
.pg { width: 41px; text-align: left; }
.pg svg { width: 16px; height: 22px; fill: none; stroke: #222; stroke-width: 4; }
.max { width: 125px; border-right: 1px solid #ccc; line-height: 46px; }
.status .max + input { margin-left: 7px; }

.combo { display: grid; grid-template-columns: 1fr 26px; }
.combo select { grid-area: 1 / 1 / 2 / 3; appearance: none; width: 100%; height: 30px; border: 1px solid #b5b5b5; background: #fff; padding: 0 5px; border-radius: 0; opacity: 1; color: #3c3c3c; }
.combo::after { content: ""; grid-area: 1 / 2; margin: 1px; border-left: 1px solid #a5a5a5; background: #f2f2f2; pointer-events: none; z-index: 1; }
.combo::before { content: ""; grid-area: 1 / 2; place-self: center; border: 6px solid transparent; border-top: 6px solid #444; border-bottom: 0; z-index: 2; pointer-events: none; }
.status .combo select { background: #fff; }
.status .combo::before { border-width: 4px 4px 0; }

.right { position: relative; border: 1px solid #a5a5a5; border-right: 0; display: flex; flex-direction: column; padding-left: 3px; min-width: 0; min-height: 0; overflow: hidden; white-space: nowrap; margin-bottom: 1px; }
.right > h2 { font-size: 22px; height: 60px; line-height: 61px; padding-left: 14px; }
.ptree { height: 120px; border: 1px solid #85858f; border-right: 0; background: #fff; padding: 2px 0 0 10px; flex: none; }
.ptree li { display: flex; align-items: center; height: 22px; line-height: 22px; }
.ptree li span { margin-left: 3px; padding: 0 2px; font-size: 16px; }
.ptree .sub { padding-left: 33px; }
.ptree .sub .dot { margin-right: 1px; }
.ptree .cur { background: #efefef; color: #222; }
.ptabs { display: flex; gap: 24px; padding: 12px 0 0 12px; height: 48px; }
.right .notch { margin: 0; flex: none; }
.right .notch::after { left: 241px; }
.pbar { display: flex; align-items: center; gap: 6px; height: 47px; margin: 12px 0 6px 13px; padding-left: 3px; background: #fff; flex: none; }
.pbar button { line-height: 0; }
.grip { border-left: 2px dotted #bbb; height: 38px; margin-right: 1px; }
.pbar .bar { width: 1px; height: 38px; background: #aaa; margin: 0 1px 0 3px; }
.pbar .apply { display: flex; align-items: center; gap: 6px; line-height: 24px; color: #777; }
.pgrid { flex: 1; min-height: 0; margin-left: 13px; border: 2px solid #a5a5a5; border-right: 0; border-bottom-width: 1px; background: #fff; display: flex; flex-direction: column; overflow: hidden; }
.pgrid table { border-collapse: separate; border-spacing: 0; table-layout: fixed; width: 340px; color: #222; font-size: 16px; }
.pgrid th, .pgrid td { width: 80px; height: 34px; padding: 0 5px; font-weight: 400; border: 1px solid #a0a0a0; border-width: 0 1px 1px 0; overflow: hidden; text-overflow: ellipsis; text-align: left; }
.pgrid .clip { text-overflow: clip; }
.pgrid td { padding-right: 2px; }
.pgrid .clip, .pgrid thead th { font-size: 17px; }
.pgrid th:first-child { width: 30px; text-align: center; background: #efefef; }
.pgrid th:nth-child(4) { width: 70px; }
.pgrid thead th { height: 30px; padding-left: 8px; border-right-color: #ddd; }
.pgrid thead th:first-child { background: #fff; }
.pgrid .ro { background: #efefef; }
.pgrid th.act, .pgrid th.act:first-child { background: #0078d7; color: #fff; }
.hbar { margin-top: auto; height: 25px; background: #efefef; padding: 7px 0 0 25px; }
.hbar i { display: block; height: 11px; background: #858585; }
.keep { display: flex; align-items: center; gap: 7px; margin-left: 19px; height: 73px; padding-bottom: 14px; flex: none; }
.keep input { appearance: none; width: 20px; height: 20px; border-radius: 4px; background: #005fb8; margin: 0; display: grid; place-items: center; }
.keep input::after { content: ""; width: 5px; height: 9px; border: solid #fff; border-width: 0 1px 1px 0; transform: rotate(45deg); margin-top: -3px; }
.btabs { display: flex; border-top: 2px solid #a5a5a5; height: 44px; flex: none; padding-left: 2px; }
.btabs a { padding: 7px 8px 0; height: 40px; }
.btabs .on { background: #d9d9d9; margin: 0 1px; }
.mark { position: absolute; right: 14px; bottom: 4px; font-size: 12px; line-height: 18px; color: #999; }

.dialog { position: absolute; left: 914px; top: 475px; width: 709px; height: 576px; background: #efefef; border: 2px solid #0072c6; border-top-width: 1px; box-shadow: 0 1px 8px rgba(0, 0, 0, .35); }
.dialog header { display: flex; justify-content: space-between; height: 50px; padding: 6px 25px 0 16px; }
.dialog h2 { font-size: 21px; line-height: 30px; }
.dialog header button { height: 26px; line-height: 0; }
.fields { display: grid; grid-template-columns: 147px 1fr; grid-template-rows: 56px 54px 52px 58px 60px 63px 43px; align-items: center; padding-left: 18px; }
.fields > label, .lab { padding-top: 4px; }
.fields > div { display: flex; align-items: center; }
.w438 { width: 438px; }
.w357 { width: 357px; }
.w273 { width: 273px; }
.ty { padding: 8px 0 0 12px; }
.radios label { display: flex; align-items: center; gap: 7px; width: 312px; padding-left: 3px; }
.radios input { appearance: none; width: 20px; height: 20px; border: 1px solid #666; border-radius: 50%; background: #f6f6f6; }
.radios input:checked { border: 6px solid #005fb8; background: #fff; }
.rev { display: flex; align-items: center; gap: 7px; margin-left: 40px; padding-top: 5px; }
.rev input { appearance: none; width: 20px; height: 20px; border: 1px solid #bdbdbd; border-radius: 4px; background: #f8f8f8; }
.combo.dis select { background: #efefef; border: 1px solid #c8c8c8; box-shadow: inset 0 0 0 1px #fff; }
.combo.dis::after { background: #fff; border: 0; }
.combo.dis::before { width: 8px; height: 8px; border: solid #aaa; border-width: 0 1px 1px 0; transform: rotate(45deg); margin-top: -4px; }
.ops { gap: 10px; }
.ops input { width: 73px; height: 29px; border: 1px solid #a5a5a5; box-shadow: inset 0 0 0 1px #fff; background: #efefef; }
.focus { width: 438px; height: 29px; display: grid; grid-template-columns: 92px 2px 1fr; align-items: center; border: 1px solid #0067c0; border-bottom-width: 2px; background: #fff; }
.focus input { grid-area: 1 / 1 / 2 / 4; border: 0; padding: 0 2px; height: 26px; width: 100%; background: none; outline: 0; font-size: 16px; }
.focus i { grid-area: 1 / 2; width: 1px; height: 23px; background: #000; margin-left: 2px; }
.expr input { width: 397px; height: 29px; border: 1px solid #a5a5a5; padding: 0 2px; background: #fff; font-size: 16px; }
.expr button { width: 44px; height: 29px; border: 1px solid #a5a5a5; border-left: 0; }
.dialog footer { display: flex; justify-content: flex-end; gap: 10px; padding: 72px 18px 0 0; }
.dialog footer button { width: 112px; height: 44px; border: 1px solid #999; }
.size { position: absolute; right: 1px; bottom: 1px; }
.arrow { position: absolute; left: 1282px; top: 171px; }
```
